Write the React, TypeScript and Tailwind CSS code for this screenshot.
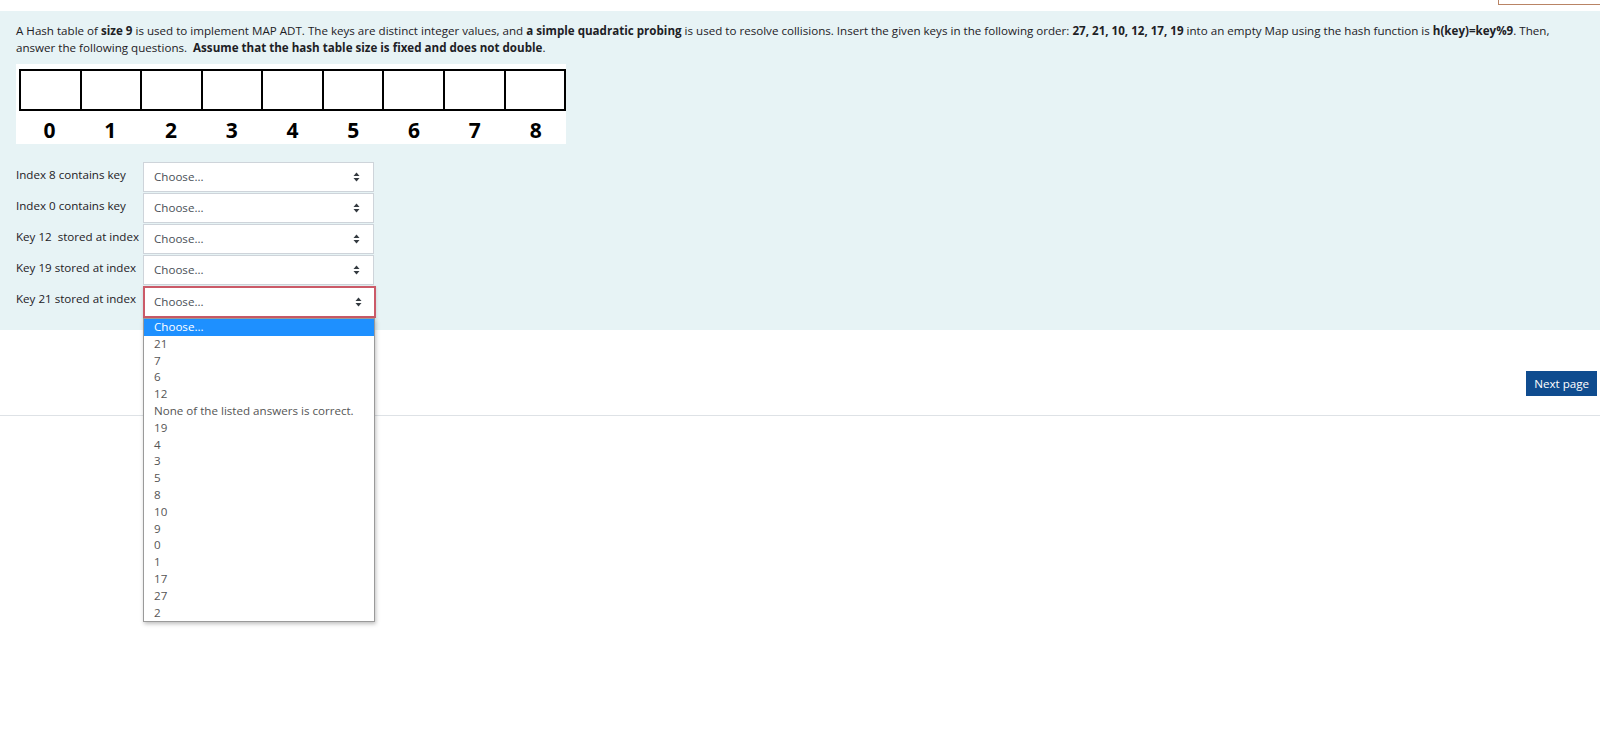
import React from 'react';

const FONT = { fontFamily: '"Open Sans", "Noto Sans", sans-serif' };

const options = [
    'Choose...', '21', '7', '6', '12', 'None of the listed answers is correct.',
    '19', '4', '3', '5', '8', '10', '9', '0', '1', '17', '27', '2',
];

const rows = [
    'Index 8 contains key',
    'Index 0 contains key',
    'Key 12  stored at index',
    'Key 19 stored at index',
    'Key 21 stored at index',
];

function Arrows() {
    return (
        <svg width="7" height="10" viewBox="0 0 7 10" className="shrink-0">
            <path d="M3.5 0.5 L6.5 4 L0.5 4 Z" fill="#343a40" />
            <path d="M3.5 9.5 L6.5 6 L0.5 6 Z" fill="#343a40" />
        </svg>
    );
}

function FakeSelect({ focused }: { focused?: boolean }) {
    return (
        <div
            className={
                focused
                    ? 'flex h-[32px] w-[233px] items-center justify-between border-2 border-[#cb5a68] bg-white pl-[9px] pr-[12px] shadow-[0_1px_3px_rgba(0,0,0,0.15)]'
                    : 'flex h-[30px] w-[231px] items-center justify-between border border-[#ced4da] bg-white pl-[10px] pr-[13px]'
            }
        >
            <span className="text-[11.6px] text-[#495057]">Choose...</span>
            <Arrows />
        </div>
    );
}

function HashTable() {
    const cells = Array.from({ length: 9 }, (_, i) => i);
    return (
        <div className="mt-[8px] w-[550px] bg-white pl-[3px] pt-[5px] pb-[1px]">
            <div className="flex w-[547px] border-2 border-black">
                {cells.map((i) => (
                    <div
                        key={i}
                        className={
                            i < 8
                                ? 'h-[38px] flex-1 border-r-2 border-black'
                                : 'h-[38px] flex-1'
                        }
                    />
                ))}
            </div>
            <div className="flex w-[547px] pt-[7px]">
                {cells.map((i) => (
                    <div
                        key={i}
                        className="flex-1 text-center text-[21px] font-bold leading-[25px] text-black"
                    >
                        {i}
                    </div>
                ))}
            </div>
        </div>
    );
}

export default function App() {
    return (
        <div className="min-h-[733px] bg-white text-[#1d2125]" style={FONT}>
            <div className="flex h-[11px] justify-end">
                <div className="h-[5px] w-[102px] border border-t-0 border-r-0 border-[#b98465]" />
            </div>

            <div className="relative bg-[#e7f3f5] px-[16px] pt-[11px] pb-[12px]">
                <p className="text-[11.6px] leading-[17px]">
                    A Hash table of <b>size 9</b> is used to implement MAP ADT. The keys are distinct integer
                    values, and <b>a simple quadratic probing</b> is used to resolve collisions. Insert the given
                    keys in the following order: <b>27, 21, 10, 12, 17, 19</b> into an empty Map using the hash
                    function is <b>h(key)=key%9</b>. Then, answer the following questions.&nbsp;{' '}
                    <b>Assume that the hash table size is fixed and does not double</b>.
                </p>

                <HashTable />

                <div className="mt-[18px] flex flex-col gap-[1px]">
                    {rows.map((label, i) => (
                        <div key={label} className="flex items-start">
                            <span className="w-[127px] shrink-0 whitespace-pre pt-[4px] text-[11.6px] leading-[17px]">
                                {label}
                            </span>
                            <div className="relative">
                                <FakeSelect focused={i === rows.length - 1} />
                                {i === rows.length - 1 && (
                                    <ul className="absolute left-0 top-[32px] z-10 w-[232px] border border-[#9a9a9a] bg-white shadow-[1px_2px_4px_rgba(0,0,0,0.25)]">
                                        {options.map((opt, j) => (
                                            <li
                                                key={opt}
                                                className={
                                                    j === 0
                                                        ? 'bg-[#1e90ff] pl-[10px] text-[11.6px] leading-[16.8px] text-white'
                                                        : 'pl-[10px] text-[11.6px] leading-[16.8px] text-[#555]'
                                                }
                                            >
                                                {opt}
                                            </li>
                                        ))}
                                    </ul>
                                )}
                            </div>
                        </div>
                    ))}
                </div>
            </div>

            <div className="flex justify-end pr-[3px] pt-[41px] pb-[19px]">
                <button
                    type="button"
                    className="h-[25px] bg-[#0f4c8f] px-[8px] text-[11.6px] text-white"
                >
                    Next page
                </button>
            </div>
            <div className="border-t border-[#dee2e6]" />
        </div>
    );
}
